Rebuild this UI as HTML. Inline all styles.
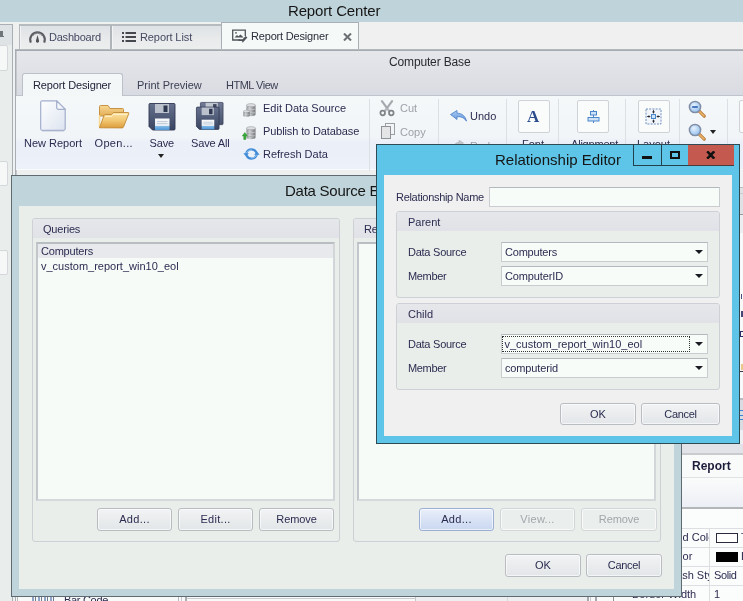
<!DOCTYPE html>
<html><head><meta charset="utf-8"><title>Report Center</title>
<style>
html,body{margin:0;padding:0}
body{width:743px;height:601px;overflow:hidden;position:relative;background:#eef1f0;font:11px "Liberation Sans",sans-serif;color:#2c2c50}
.a{position:absolute;box-sizing:border-box}
.t{position:absolute;white-space:nowrap;line-height:13px;height:13px;filter:blur(.35px)}
.ttl{font-size:15px;line-height:18px;height:18px;color:#151515;filter:blur(.2px)}
.btn{position:absolute;box-sizing:border-box;border:1px solid #b9bdc2;border-radius:3px;background:linear-gradient(#f1f3f4,#e3e6e8);text-align:center;line-height:21px;height:23px;width:76px;box-shadow:inset 0 0 0 1px rgba(255,255,255,.6);filter:blur(.3px)}
.btn.dis{color:#a3a6ab;background:#eaeeec;border-color:#d3d6d8}
.btn.hot{background:linear-gradient(#e9effa,#d9e3f5 50%,#c9d7f0);border-color:#9db0d3}
.grp{position:absolute;box-sizing:border-box;border:1px solid #cdd0d4;border-radius:3px;background:#e9eeea}
.grp .h{position:absolute;left:0;right:0;top:0;height:19px;background:linear-gradient(#e5e7eb,#e0e2e7);border-radius:2px 2px 0 0}
.lst{position:absolute;box-sizing:border-box;border:2px solid #cdd1d4;border-top-color:#b9bec3;border-left-color:#c3c7cb;border-bottom-color:#d6d9dc;border-right-color:#d3d6d9;background:#f7fbf8}
.cmb{position:absolute;box-sizing:border-box;border:1px solid #c9cdd0;border-top-color:#b4b9be;background:#f8fcf9;height:20px}
.cmb:after{content:"";position:absolute;right:4px;top:7px;border:4px solid transparent;border-top:4px solid #1a1a22;border-bottom:0}
.sep{position:absolute;width:1px;background:#dcdfe4}
.bx{position:absolute;box-sizing:border-box;border:1px solid #cfd2d6;border-radius:2px;background:#fafcfc}
</style></head><body>

<!-- main window title -->
<div class="a" style="left:0;top:0;width:743px;height:22px;background:#bfd4da"></div>
<div class="t ttl" style="left:288px;top:2px;letter-spacing:-.15px">Report Center</div>

<!-- left dock panel -->
<div class="a" style="left:0;top:24px;width:13px;height:577px;background:#e9edeb;border-right:1px solid #a9afb4;border-top:1px solid #a9afb4"></div>
<div class="a" style="left:0;top:25px;width:12px;height:20px;background:#e0e3e6"></div>
<div class="a" style="left:0;top:31px;width:3px;height:5px;background:#70757a"></div>
<div class="a" style="left:0;top:36px;width:4px;height:1px;background:#70757a"></div>
<div class="a" style="left:-2px;top:45px;width:10px;height:26px;background:#f6f8f8;border:1px solid #d5d8da;border-radius:2px"></div>
<div class="a" style="left:-2px;top:161px;width:10px;height:25px;background:#f6f8f8;border:1px solid #d5d8da;border-radius:2px"></div>
<div class="a" style="left:-2px;top:250px;width:10px;height:25px;background:#f6f8f8;border:1px solid #d5d8da;border-radius:2px"></div>

<!-- document tabs -->
<div class="a" style="left:359px;top:22px;width:384px;height:28px;background:#f0f0f0"></div>
<div class="a" style="left:19px;top:24px;width:203px;height:26px;background:linear-gradient(#dfe2e5,#e9ebec 60%,#ecefee);border:1px solid #b3b8bc;border-top:2px solid #b6bbbf;border-bottom:0"></div>
<div class="a" style="left:20px;top:26px;width:1px;height:24px;background:#f3f5f5"></div>
<div class="a" style="left:110px;top:25px;width:2px;height:25px;background:#b0b5ba"></div>
<div class="a" style="left:112px;top:26px;width:1px;height:24px;background:#f3f5f5"></div>
<svg class="a" style="left:28px;top:30px" width="19" height="14" viewBox="0 0 19 14"><path d="M2.800 12.600A7.300 7.300 0 1 1 16.200 12.600" fill="none" stroke="#5a5e63" stroke-width="2.100"/><path d="M9.500 5l1.500 5.600a1.600 1.600 0 1 1-3 0z" fill="#4e5257"/><path d="M5 5.800A5.400 5.400 0 0 1 14 5.800" fill="none" stroke="#9a9ea3" stroke-width="1.200" stroke-dasharray="1.200 1"/></svg>
<div class="t" style="left:49px;top:31px;color:#454a62;letter-spacing:-.22px">Dashboard</div>
<svg class="a" style="left:122px;top:32px" width="15" height="11" viewBox="0 0 15 11"><g fill="#45484d"><rect x="0" y="0" width="2" height="2"/><rect x="3.500" y="0" width="10.500" height="2"/><rect x="0" y="4" width="2" height="2"/><rect x="3.500" y="4" width="10.500" height="2"/><rect x="0" y="8" width="2" height="2"/><rect x="3.500" y="8" width="10.500" height="2"/></g></svg>
<div class="t" style="left:140px;top:31px;color:#454a62;letter-spacing:-.1px">Report List</div>

<!-- content panel -->
<div class="a" style="left:15px;top:49px;width:730px;height:560px;border:1px solid #a9aeb4;border-top:1px solid #b4b9be;background:#eef0f0"></div>
<div class="a" style="left:15px;top:50px;width:728px;height:1px;background:#a4aab0"></div>
<div class="a" style="left:16px;top:51px;width:1px;height:550px;background:#c5c9ce"></div>
<div class="a" style="left:17px;top:51px;width:726px;height:44px;background:linear-gradient(#e5e7eb,#d9dbe2)"></div>
<div class="t" style="left:389px;top:56px;font-size:12px;color:#2a2a30;letter-spacing:-.15px">Computer Base</div>

<!-- active doc tab -->
<div class="a" style="left:221px;top:22px;width:138px;height:27px;background:#f5f9f7;border:1px solid #a9afb5;border-bottom:0"></div>
<svg class="a" style="left:232px;top:29px" width="17" height="15" viewBox="0 0 17 15"><path d="M13.300 7V1.200H.7v9.800H8" fill="none" stroke="#505358" stroke-width="1.300"/><path d="M2.500 8.500l2.500-2.500 1.500 1.200 2-1.700 3.200 3z" fill="#505358"/><circle cx="4" cy="3.800" r=".9" fill="#505358"/><path d="M6.500 10.300h4l3.200-3.400 1.700 1.600-4.800 5.200-.6-1.800H6.500z" fill="#505358"/></svg>
<div class="t" style="left:251px;top:30px;color:#2a2d3a;letter-spacing:-.18px">Report Designer</div>
<svg class="a" style="left:343px;top:33px" width="9" height="8" viewBox="0 0 9 8"><path d="M1 0.5L8 7.5M8 0.5L1 7.5" stroke="#6b6e73" stroke-width="2"/></svg>

<!-- ribbon tabs -->
<div class="a" style="left:16px;top:95px;width:727px;height:75px;background:linear-gradient(#f5f8f9,#f2f5f8 55%,#eaeff8 64%,#edf1f9);border-top:1px solid #bfc3cb"></div>
<div class="a" style="left:22px;top:73px;width:101px;height:23px;background:#f3f7f7;border:1px solid #bcc0c8;border-bottom:0;border-radius:3px 3px 0 0"></div>
<div class="t" style="left:33px;top:79px;color:#23233a;letter-spacing:-.13px">Report Designer</div>
<div class="t" style="left:137px;top:79px;color:#3b3e52">Print Preview</div>
<div class="t" style="left:226px;top:79px;color:#3b3e52;letter-spacing:-.5px">HTML View</div>
<div class="a" style="left:16px;top:169px;width:727px;height:1px;background:#f9fafc"></div>

<!-- ribbon items -->
<svg class="a" style="left:40px;top:100px" width="26" height="32" viewBox="0 0 26 32"><defs><linearGradient id="pg" x1="0" y1="0" x2="1" y2="1"><stop offset="0" stop-color="#fdfefe"/><stop offset="1" stop-color="#dde4f0"/></linearGradient></defs><path d="M2.200 .8h14.500l8.500 8.500v19.500q0 1.500-1.500 1.500H2.200q-1.500 0-1.500-1.500V2.300q0-1.500 1.500-1.500z" fill="url(#pg)" stroke="#a3aecb" stroke-width="1.200"/><path d="M16.700 .8v7q0 1.500 1.500 1.500h7z" fill="#f4f7fb" stroke="#a3aecb" stroke-width="1.200" stroke-linejoin="round"/><path d="M2 31.300h22" stroke="#c9d0e0" stroke-width=".8"/></svg>
<div class="t" style="left:24px;top:137px">New Report</div>
<svg class="a" style="left:98px;top:104px" width="32" height="26" viewBox="0 0 32 26"><defs><linearGradient id="fo" x1="0" y1="0" x2="0" y2="1"><stop offset="0" stop-color="#fbe3a6"/><stop offset=".5" stop-color="#f2c873"/><stop offset="1" stop-color="#dd9c3c"/></linearGradient><linearGradient id="fb" x1="0" y1="0" x2="0" y2="1"><stop offset="0" stop-color="#f6d894"/><stop offset="1" stop-color="#e5ad55"/></linearGradient></defs><path d="M1.500 2.500q0-1 1-1h7.500l2 3h12.500q1 0 1 1V12H1.500z" fill="url(#fb)" stroke="#c18a36" stroke-width=".9"/><path d="M1.500 23.500V10" stroke="#c18a36" stroke-width=".9"/><path d="M1.500 23v-12" stroke="#f6d894" stroke-width="1.500"/><path d="M1.500 23.800L6 11.500q.3-1 1.400-1h6l2-2H30q1.200 0 .8 1.100L25.500 23q-.3.900-1.300.9z" fill="url(#fo)" stroke="#c18a36" stroke-width=".9"/><path d="M7 12.500h6.500l2-2H29" stroke="#fdf0cc" stroke-width=".9" fill="none"/></svg>
<div class="t" style="left:94.500px;top:137px;letter-spacing:.35px">Open...</div>
<svg class="a" style="left:148px;top:102px" width="28" height="29" viewBox="0 0 28 29"><defs><linearGradient id="fl" x1="0" y1="0" x2="0" y2="1"><stop offset="0" stop-color="#66718d"/><stop offset="1" stop-color="#3a4562"/></linearGradient><linearGradient id="lb" x1="0" y1="0" x2="0" y2="1"><stop offset="0" stop-color="#fafbfc"/><stop offset=".62" stop-color="#e4ebf3"/><stop offset=".7" stop-color="#7bb4e4"/><stop offset="1" stop-color="#4f97d6"/></linearGradient><g id="dsk"><path d="M1.500 .5h24q1 0 1 1v24.500q0 1-1 1H4l-3.500-3.500V1.500q0-1 1-1z" fill="url(#fl)" stroke="#2f3852" stroke-width=".9"/><rect x="6.500" y="1" width="14" height="9" fill="#bcc2cd"/><rect x="15" y="2.500" width="4" height="6.500" fill="#2e3750"/><rect x="6.500" y="15.500" width="14.500" height="11.500" fill="url(#lb)"/><path d="M8.500 18.500h10.500M8.500 20.500h10.500" stroke="#c0c7d2" stroke-width=".9"/></g></defs><use href="#dsk" x=".5" y="1"/></svg>
<div class="t" style="left:149.500px;top:137px;letter-spacing:-.15px">Save</div>
<div class="a" style="left:158px;top:154px;width:0;height:0;border:3.500px solid transparent;border-top:4px solid #222;border-bottom:0"></div>
<svg class="a" style="left:195px;top:101px" width="30" height="30" viewBox="0 0 30 30"><g transform="translate(5 1) scale(.87 .84)" opacity=".92"><use href="#dsk"/></g><g transform="translate(1 5.700) scale(.87 .84)"><use href="#dsk"/></g></svg>
<div class="t" style="left:191px;top:137px;letter-spacing:-.15px">Save All</div>

<svg class="a" style="left:243px;top:103px" width="14" height="14" viewBox="0 0 14 14"><defs><linearGradient id="dbg" x1="0" y1="0" x2="1" y2="0"><stop offset="0" stop-color="#8a8d90"/><stop offset=".35" stop-color="#d0d2d4"/><stop offset="1" stop-color="#6f7275"/></linearGradient><g id="dbi"><path d="M0 1.600v2.600c0 .9 2 1.600 4.500 1.600S9 5.100 9 4.200V1.600z" fill="url(#dbg)"/><ellipse cx="4.500" cy="1.600" rx="4.500" ry="1.600" fill="#dcdee0" stroke="#8d9093" stroke-width=".5"/></g></defs><use href="#dbi" x="3.500" y="7.400"/><use href="#dbi" x="3.500" y="4"/><use href="#dbi" x="3.500" y=".6"/><g transform="translate(.3 7.200) scale(.72)"><use href="#dbi" y="3.400"/><use href="#dbi"/></g></svg>
<div class="t" style="left:263px;top:102px">Edit Data Source</div>
<svg class="a" style="left:242px;top:126px" width="15" height="15" viewBox="0 0 15 15"><use href="#dbi" x="4.500" y="7.400"/><use href="#dbi" x="4.500" y="4"/><use href="#dbi" x="4.500" y=".6"/><path d="M2.800 6.500L5.400 10H3.900v3.500H1.700V10H.2z" fill="#35a835" stroke="#2a8a2a" stroke-width=".4"/></svg>
<div class="t" style="left:263px;top:125px;letter-spacing:-.12px">Publish to Database</div>
<svg class="a" style="left:243px;top:148px" width="17" height="12" viewBox="0 0 17 12"><g fill="none" stroke-linecap="round"><path d="M3.200 6.500C3 3 6 1.400 8.500 1.400c2.300 0 3.800 1 4.600 2.600" stroke="#3f8bd8" stroke-width="2.200"/><path d="M13.800 5.500c.2 3.500-2.800 5.100-5.300 5.100-2.300 0-3.800-1-4.600-2.600" stroke="#3f8bd8" stroke-width="2.200"/><path d="M3.200 6.300C3.100 3.600 6 2 8.500 2" stroke="#a9d2f5" stroke-width=".8"/><path d="M13.800 5.700c.1 2.700-2.800 4.300-5.300 4.300" stroke="#a9d2f5" stroke-width=".8"/></g><path d="M.3 5.200h5.600L3.100 8.600z" fill="#3f8bd8"/><path d="M16.700 6.800h-5.600l2.800-3.400z" fill="#3f8bd8"/></svg>
<div class="t" style="left:263px;top:148px">Refresh Data</div>

<div class="sep" style="left:369px;top:99px;height:72px"></div>
<svg class="a" style="left:379px;top:100px" width="16" height="17" viewBox="0 0 16 17"><path d="M2.500 0.500L10.500 11.500M13.500 0.500L5.500 11.500" stroke="#b2b5ba" stroke-width="2.200"/><path d="M2.500 0.500L8 8M13.500 0.500L8 8" stroke="#9da0a5" stroke-width="1"/><circle cx="3.700" cy="13" r="2.300" fill="none" stroke="#7f8287" stroke-width="1.700"/><circle cx="12.300" cy="13" r="2.300" fill="none" stroke="#7f8287" stroke-width="1.700"/></svg>
<div class="t" style="left:400px;top:102px;color:#9ea1a8">Cut</div>
<svg class="a" style="left:381px;top:123px" width="14" height="16" viewBox="0 0 14 16"><rect x="4.500" y=".5" width="9" height="11" fill="#f3f4f5" stroke="#9b9ea3"/><rect x=".5" y="3.500" width="9" height="12" fill="#e4e5e7" stroke="#8e9196"/></svg>
<div class="t" style="left:400px;top:126px;color:#9ea1a8">Copy</div>
<div class="sep" style="left:438px;top:99px;height:72px"></div>
<svg class="a" style="left:450px;top:110px" width="17" height="12" viewBox="0 0 17 12"><defs><linearGradient id="ug" x1="0" y1="0" x2="0" y2="1"><stop offset="0" stop-color="#a9cdf5"/><stop offset="1" stop-color="#5f94d8"/></linearGradient></defs><path d="M0.500 4.500L7 0.500v2.700c5 0 8.500 3 9.500 8C14 7.500 11 6.500 7 6.700V9.500z" fill="url(#ug)" stroke="#4a7fc6" stroke-width=".8"/></svg>
<svg class="a" style="left:454px;top:140px" width="10" height="6" viewBox="0 0 10 6"><path d="M9.500 3L5 .3v2C2.500 2.300.8 3.500.3 6 1.500 4.500 3 4.200 5 4.300V6z" fill="#c3c6cb" stroke="#a5a8ad" stroke-width=".5"/></svg>
<div class="t" style="left:470px;top:110px">Undo</div>
<div class="t" style="left:470px;top:140px;color:#9ea1a8">Redo</div>
<div class="sep" style="left:506px;top:99px;height:72px"></div>
<div class="bx" style="left:518px;top:100px;width:32px;height:33px"></div>
<div class="t" style="left:527px;top:107px;font:bold 17px/20px 'Liberation Serif',serif;height:20px;color:#2c4c8e">A</div>
<div class="t" style="left:522px;top:138px">Font</div>
<div class="sep" style="left:558px;top:99px;height:72px"></div>
<div class="bx" style="left:577px;top:100px;width:32px;height:33px"></div>
<svg class="a" style="left:587px;top:110px" width="13" height="13" viewBox="0 0 13 13"><path d="M6.500 0v13" stroke="#4a86cc" stroke-width="1"/><rect x="3.500" y="1.500" width="6" height="3.500" fill="#cde2f7" stroke="#4a86cc"/><rect x="1" y="7.500" width="11" height="3.500" fill="#cde2f7" stroke="#4a86cc"/></svg>
<div class="t" style="left:571px;top:138px;letter-spacing:-.2px">Alignment</div>
<div class="sep" style="left:625px;top:99px;height:72px"></div>
<div class="bx" style="left:638px;top:100px;width:32px;height:33px"></div>
<svg class="a" style="left:645px;top:108px" width="17" height="17" viewBox="0 0 17 17"><rect x="1" y="1" width="15" height="15" fill="#f2f6fb" stroke="#6e8fbe" stroke-dasharray="2 1.200"/><rect x="6.500" y="6.500" width="4" height="4" fill="#cfe4f8" stroke="#4a86cc"/><path d="M8.500 2.200v3M8.500 11.800v3M2.200 8.500h3M11.800 8.500h3" stroke="#2a2d33" stroke-width="1"/><path d="M7 3.600l1.500 1.800L10 3.600zM7 13.400l1.500-1.800 1.500 1.800zM3.600 7l1.800 1.500L3.600 10zM13.400 7l-1.800 1.500 1.800 1.500z" fill="#2a2d33"/></svg>
<div class="t" style="left:637px;top:138px">Layout</div>
<div class="sep" style="left:679px;top:99px;height:72px"></div>
<svg class="a" style="left:688px;top:100px" width="18" height="18" viewBox="0 0 18 18"><defs><radialGradient id="zg" cx=".4" cy=".35" r=".7"><stop offset="0" stop-color="#e6f2fd"/><stop offset="1" stop-color="#8fbdec"/></radialGradient><g id="zm"><path d="M11.200 11.200l5 5" stroke="#b97a3a" stroke-width="3.200" stroke-linecap="round"/><path d="M11.200 11.200l4.800 4.800" stroke="#e9b567" stroke-width="1.600" stroke-linecap="round"/><circle cx="7" cy="7" r="5.600" fill="url(#zg)" stroke="#7f8da6" stroke-width="1.500"/></g></defs><use href="#zm"/><path d="M4.200 7h5.600" stroke="#3c6db8" stroke-width="1.800"/></svg>
<svg class="a" style="left:688px;top:123px" width="18" height="18" viewBox="0 0 18 18"><use href="#zm"/></svg>
<div class="a" style="left:710px;top:130px;width:0;height:0;border:3.500px solid transparent;border-top:4px solid #222;border-bottom:0"></div>
<div class="sep" style="left:727px;top:99px;height:72px"></div>
<div class="bx" style="left:739px;top:100px;width:32px;height:33px"></div>

<!-- bottom strip under dialog -->
<div class="a" style="left:16px;top:597px;width:666px;height:4px;background:#f8faf9"></div>
<div class="a" style="left:17px;top:597px;width:1px;height:4px;background:#b5b9bd"></div>
<div class="a" style="left:178px;top:597px;width:1px;height:4px;background:#b5b9bd"></div>
<div class="a" style="left:181px;top:597px;width:1px;height:4px;background:#c5c8cc"></div>
<div class="a" style="left:185px;top:597px;width:2px;height:4px;background:#a9adb2"></div>
<div class="a" style="left:187px;top:598px;width:228px;height:1px;background:#c9ccd0"></div>
<div class="a" style="left:415px;top:597px;width:172px;height:4px;background:#eceeef"></div>
<div class="a" style="left:415px;top:597px;width:1px;height:4px;background:#c5c8cc"></div>
<div class="a" style="left:507px;top:597px;width:1px;height:4px;background:#d5d8dc"></div>
<div class="a" style="left:587px;top:597px;width:2px;height:4px;background:#a5a9ae"></div>
<div class="a" style="left:590px;top:597px;width:1px;height:4px;background:#c5c8cc"></div>
<div class="a" style="left:595px;top:597px;width:2px;height:4px;background:#a5a9ae"></div>
<div class="a" style="left:613px;top:597px;width:1px;height:4px;background:#8e9297"></div>
<div class="a" style="left:32px;top:597px;width:22px;height:4px;background:repeating-linear-gradient(90deg,#8fa5c8 0 2px,#f8faf9 2px 3px,#6f7a8c 3px 4px,#f8faf9 4px 6px)"></div>
<div class="t" style="left:64px;top:594px;letter-spacing:-.3px">Bar Code</div>

<!-- right sliver behind dialog -->
<div class="a" style="left:740px;top:171px;width:3px;height:273px;background:#f7faf8"></div>
<div class="a" style="left:740px;top:171px;width:3px;height:16px;background:#f1f3f4"></div>
<div class="a" style="left:740px;top:187px;width:3px;height:1px;background:#b9bcc1"></div>
<div class="a" style="left:740px;top:188px;width:3px;height:26px;background:#e0e2e6"></div>
<div class="a" style="left:740px;top:193px;width:3px;height:1px;background:#c9ccd0"></div>
<div class="a" style="left:740px;top:214px;width:3px;height:1px;background:#999ca2"></div>
<div class="a" style="left:740px;top:215px;width:3px;height:18px;background:#eceef0"></div>
<div class="a" style="left:741px;top:294px;width:1px;height:5px;background:#4a4f86"></div>
<div class="a" style="left:741px;top:311px;width:2px;height:6px;background:#454878"></div>
<div class="a" style="left:740px;top:331px;width:3px;height:6px;border:1px solid #2c2f66;border-right:0"></div>
<div class="a" style="left:741px;top:364px;width:2px;height:6px;background:#e9c98a"></div>
<div class="a" style="left:740px;top:371px;width:3px;height:1px;background:#3a3a4a"></div>
<div class="a" style="left:740px;top:398px;width:3px;height:2px;background:#b9bcc1"></div>
<div class="a" style="left:740px;top:400px;width:3px;height:30px;background:#d9dce0"></div>
<div class="a" style="left:740px;top:410px;width:3px;height:1px;background:#3f83d2"></div>
<div class="a" style="left:740px;top:415px;width:3px;height:1px;background:#3f83d2"></div>
<div class="a" style="left:740px;top:419px;width:3px;height:1px;background:#3f83d2"></div>
<div class="a" style="left:740px;top:430px;width:3px;height:14px;background:#eef0f1"></div>

<!-- background property grid (right) -->
<div class="a" style="left:682px;top:444px;width:61px;height:157px;background:#fff"></div>
<div class="a" style="left:682px;top:444px;width:61px;height:9px;background:#e1e3e8"></div>
<div class="a" style="left:682px;top:453px;width:61px;height:2px;background:#c9cbcf"></div>
<div class="a" style="left:682px;top:455px;width:61px;height:22px;background:#f8fbf9"></div>
<div class="t" style="left:692px;top:459px;font-weight:bold;font-size:12px;line-height:14px;height:14px;color:#1e1e3c">Report</div>
<div class="a" style="left:682px;top:477px;width:61px;height:1px;background:#dfe1e4"></div>
<div class="a" style="left:682px;top:478px;width:61px;height:29px;background:linear-gradient(#fafcfb,#eceef6)"></div>
<div class="a" style="left:682px;top:507px;width:61px;height:2px;background:#b4b6ba"></div>
<div class="a" style="left:682px;top:509px;width:61px;height:92px;background:#fbfdfc"></div>
<div class="a" style="left:682px;top:528px;width:61px;height:1px;background:#dcdee2"></div>
<div class="a" style="left:682px;top:547px;width:61px;height:1px;background:#dcdee2"></div>
<div class="a" style="left:682px;top:566px;width:61px;height:1px;background:#dcdee2"></div>
<div class="a" style="left:682px;top:585px;width:61px;height:1px;background:#dcdee2"></div>
<div class="a" style="left:709px;top:528px;width:1px;height:73px;background:#dcdee2"></div>
<div class="a" style="left:600px;top:529px;width:109px;height:72px;overflow:hidden">
 <div class="t" style="left:30px;top:2px">Background Color</div>
 <div class="t" style="left:30px;top:21px">Border Color</div>
 <div class="t" style="left:32px;top:40px">Border Dash Style</div>
 <div class="t" style="left:32px;top:59px">Border Width</div>
</div>
<div class="a" style="left:716px;top:533px;width:22px;height:10px;border:1px solid #2b2b3d;background:#fff"></div>
<div class="a" style="left:716px;top:552px;width:22px;height:10px;background:#000"></div>
<div class="t" style="left:714px;top:569px;letter-spacing:-.4px">Solid</div>
<div class="t" style="left:714px;top:588px">1</div>
<div class="t" style="left:741px;top:531px">T</div>
<div class="t" style="left:741px;top:550px">B</div>

<!-- Data Source Editor dialog -->
<div class="a" style="left:11px;top:175px;width:671px;height:422px;background:#c0d5db;border:1px solid #5f6b70"></div>
<div class="a" style="left:19px;top:206px;width:655px;height:383px;background:#e9eeea"></div>
<div class="t ttl" style="left:285px;top:182px;letter-spacing:-.25px">Data Source Editor</div>

<div class="grp" style="left:32px;top:218px;width:308px;height:324px"><div class="h"></div></div>
<div class="t" style="left:43px;top:223px;letter-spacing:-.2px">Queries</div>
<div class="lst" style="left:36px;top:242px;width:299px;height:259px"></div>
<div class="a" style="left:38px;top:244px;width:295px;height:14px;background:#e7e9ed"></div>
<div class="t" style="left:41px;top:245px;letter-spacing:-.2px">Computers</div>
<div class="t" style="left:41px;top:260px">v_custom_report_win10_eol</div>
<div class="btn" style="left:97px;top:508px;width:75px;letter-spacing:.3px">Add...</div>
<div class="btn" style="left:178px;top:508px;width:75px;letter-spacing:.3px">Edit...</div>
<div class="btn" style="left:259px;top:508px;width:75px;letter-spacing:-.1px">Remove</div>

<div class="grp" style="left:353px;top:218px;width:308px;height:324px"><div class="h"></div></div>
<div class="t" style="left:364px;top:223px;letter-spacing:-.2px">Relationships</div>
<div class="lst" style="left:357px;top:242px;width:299px;height:259px"></div>
<div class="btn hot" style="left:419px;top:508px;width:75px;letter-spacing:.3px">Add...</div>
<div class="btn dis" style="left:500px;top:508px;width:75px;letter-spacing:.3px">View...</div>
<div class="btn dis" style="left:581px;top:508px;letter-spacing:-.1px">Remove</div>

<div class="btn" style="left:505px;top:554px">OK</div>
<div class="btn" style="left:586px;top:554px;letter-spacing:-.3px">Cancel</div>

<!-- Relationship Editor dialog -->
<div class="a" style="left:376px;top:144px;width:364px;height:300px;background:#5ec5e8;border:1px solid #2d4a55"></div>
<div class="a" style="left:384px;top:175px;width:348px;height:261px;background:#f0f0f0"></div>
<div class="t ttl" style="left:495px;top:151px">Relationship Editor</div>
<div class="a" style="left:633px;top:145px;width:29px;height:21px;border-left:1px solid #23414d;border-bottom:1px solid #23414d"></div>
<div class="a" style="left:661px;top:145px;width:27px;height:21px;border-left:1px solid #23414d;border-bottom:1px solid #23414d"></div>
<div class="a" style="left:688px;top:145px;width:46px;height:21px;background:#c45950;border-bottom:1px solid #4a3a3c"></div>
<div class="a" style="left:642px;top:156px;width:10px;height:3px;background:#111"></div>
<div class="a" style="left:670px;top:151px;width:10px;height:8px;border:2px solid #111"></div>
<svg class="a" style="left:706px;top:151px" width="10" height="8" viewBox="0 0 10 8"><path d="M1.200 0.300L8.300 7.700M8.300 0.300L1.200 7.700" stroke="#111" stroke-width="2.500"/></svg>

<div class="t" style="left:396px;top:191px;letter-spacing:-.3px">Relationship Name</div>
<div class="a" style="left:489px;top:187px;width:231px;height:20px;border:1px solid #c9cdd0;border-top-color:#b4b9be;background:#f8fcf9"></div>

<div class="grp" style="left:396px;top:211px;width:324px;height:87px"><div class="h"></div></div>
<div class="t" style="left:408px;top:216px">Parent</div>
<div class="t" style="left:408px;top:246px;letter-spacing:-.25px">Data Source</div>
<div class="cmb" style="left:501px;top:242px;width:207px"></div>
<div class="t" style="left:505px;top:246px;letter-spacing:-.2px">Computers</div>
<div class="t" style="left:408px;top:270px;letter-spacing:-.35px">Member</div>
<div class="cmb" style="left:501px;top:266px;width:207px"></div>
<div class="t" style="left:505px;top:270px;letter-spacing:-.13px">ComputerID</div>

<div class="grp" style="left:396px;top:303px;width:324px;height:87px"><div class="h"></div></div>
<div class="t" style="left:408px;top:308px">Child</div>
<div class="t" style="left:408px;top:338px;letter-spacing:-.25px">Data Source</div>
<div class="cmb" style="left:501px;top:334px;width:207px"></div>
<div class="a" style="left:502px;top:336px;width:188px;height:16px;border:1px dotted #333"></div>
<div class="t" style="left:504.500px;top:338px">v_custom_report_win10_eol</div>
<div class="t" style="left:408px;top:362px;letter-spacing:-.35px">Member</div>
<div class="cmb" style="left:501px;top:358px;width:207px"></div>
<div class="t" style="left:505px;top:362px;letter-spacing:-.15px">computerid</div>

<div class="btn" style="left:560px;top:403px;width:76px;height:22px;line-height:20px">OK</div>
<div class="btn" style="left:641px;top:403px;width:79px;height:22px;line-height:20px;letter-spacing:-.3px">Cancel</div>

</body></html>
